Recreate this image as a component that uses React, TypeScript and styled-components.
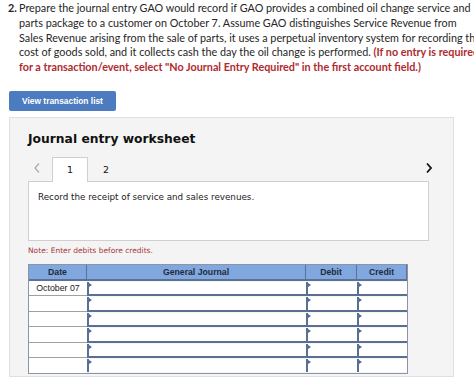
import React from "react";
import styled, { createGlobalStyle } from "styled-components";

const GlobalStyle = createGlobalStyle`
  body {
    margin: 0;
    background: #fff;
    overflow: hidden;
  }
`;

const Page = styled.div`
  width: 474px;
  height: 380px;
  overflow: hidden;
`;

const Question = styled.div`
  display: flex;
  padding: 1px 0 0 8px;
  font-family: Lato, "Liberation Sans", sans-serif;
  font-size: 10.8px;
  line-height: 14.8px;
  color: #262626;
  white-space: nowrap;
`;

const Number = styled.span`
  font-weight: 700;
  width: 11px;
  flex: none;
`;

const Emphasis = styled.span`
  color: #b02a2e;
  font-weight: 700;
`;

const ActionButton = styled.button`
  display: block;
  margin: 16px 0 0 9px;
  width: 107px;
  height: 20px;
  padding: 0;
  border: none;
  border-radius: 2px;
  background: #4c7bbf;
  color: #fff;
  font-family: "Liberation Sans", Arial, sans-serif;
  font-size: 8.4px;
  font-weight: 700;
`;

const Panel = styled.div`
  margin: 6px 0 0 9px;
  width: 425px;
  height: 258px;
  padding: 0 0 0 18px;
  background: #f4f4f4;
  border: 1px solid #e0e0e0;
`;

const Title = styled.h2`
  margin: 12px 0 0 0;
  font-family: "DejaVu Sans", Verdana, sans-serif;
  font-size: 12.3px;
  font-weight: 700;
  color: #111;
  line-height: 18px;
`;

const TabRow = styled.div`
  display: flex;
  align-items: flex-end;
  width: 400px;
  height: 27px;
  margin-top: 6px;
  font-family: "DejaVu Sans", Verdana, sans-serif;
  font-size: 9.5px;
`;

const Arrow = styled.span<{ $active?: boolean }>`
  display: flex;
  width: ${(p) => (p.$active ? "auto" : "19px")};
  margin-left: ${(p) => (p.$active ? "auto" : "5px")};
  margin-right: ${(p) => (p.$active ? "-5px" : "0")};
  align-self: center;
  margin-top: 2px;
`;

const Tab = styled.div<{ $selected?: boolean }>`
  width: 34px;
  height: 24px;
  display: flex;
  align-items: center;
  justify-content: center;
  background: ${(p) => (p.$selected ? "#fff" : "transparent")};
  border: 1px solid ${(p) => (p.$selected ? "#cfcfcf" : "transparent")};
  border-bottom: none;
  margin-bottom: -1px;
  position: relative;
  z-index: 1;
  color: #111;
`;

const Prompt = styled.div`
  width: 390px;
  height: 48px;
  padding: 10px 0 0 9px;
  background: #fff;
  border: 1px solid #cfcfcf;
  font-family: "DejaVu Sans", Verdana, sans-serif;
  font-size: 8.75px;
  color: #222;
`;

const Note = styled.div`
  margin-top: 5px;
  font-family: "DejaVu Sans", Verdana, sans-serif;
  font-size: 7.5px;
  color: #a8343a;
`;

const Table = styled.div`
  margin-top: 9px;
  width: 378px;
  display: grid;
  grid-template-columns: 58px 219px 51px 50px;
  border: 1px solid #8a96a8;
  font-family: "Liberation Sans", Arial, sans-serif;
`;

const HeadCell = styled.div`
  height: 14px;
  display: flex;
  align-items: center;
  justify-content: center;
  background: #80a7de;
  border-right: 1px solid #5b7296;
  border-bottom: 2px solid #5b7296;
  font-size: 8.7px;
  font-weight: 700;
  color: #1f2a3a;
  &:last-child {
    border-right: none;
  }
`;

const DateCell = styled.div<{ $last?: boolean }>`
  height: 14.5px;
  display: flex;
  align-items: center;
  justify-content: center;
  background: #fff;
  border-bottom: ${(p) => (p.$last ? "none" : "1px solid #a0a0a0")};
  font-size: 8.8px;
  color: #222;
`;

const InputCell = styled.div<{ $last?: boolean }>`
  position: relative;
  height: 12.5px;
  margin-top: 1px;
  background: #fff;
  border-left: 2px solid #5a6f92;
  border-bottom: ${(p) => (p.$last ? "none" : "2px solid #5a6f92")};
  &::before {
    content: "";
    position: absolute;
    top: 1px;
    left: 0;
    border-top: 2px solid transparent;
    border-bottom: 2px solid transparent;
    border-left: 3px solid #4a6a9e;
  }
`;

const Chevron = ({ dir, color, weight }: { dir: "left" | "right"; color: string; weight: number }) => (
  <svg width="8" height="12" viewBox="0 0 8 12">
    <path
      d={dir === "left" ? "M6 1.5 L2 6 L6 10.5" : "M2 1.5 L6 6 L2 10.5"}
      fill="none"
      stroke={color}
      strokeWidth={weight}
    />
  </svg>
);

const rows = ["October 07", "", "", "", "", ""];

export default function App() {
  return (
    <Page>
      <GlobalStyle />
      <Question>
        <Number>2.</Number>
        <div>
          Prepare the journal entry GAO would record if GAO provides a combined oil change service and
          <br />
          parts package to a customer on October 7. Assume GAO distinguishes Service Revenue from
          <br />
          Sales Revenue arising from the sale of parts, it uses a perpetual inventory system for recording the
          <br />
          cost of goods sold, and it collects cash the day the oil change is performed.{" "}
          <Emphasis>(If no entry is required</Emphasis>
          <br />
          <Emphasis>
            for a transaction/event, select "No Journal Entry Required" in the first account field.)
          </Emphasis>
        </div>
      </Question>
      <ActionButton>View transaction list</ActionButton>
      <Panel>
        <Title>Journal entry worksheet</Title>
        <TabRow>
          <Arrow>
            <Chevron dir="left" color="#a9a9a9" weight={1.2} />
          </Arrow>
          <Tab $selected>1</Tab>
          <Tab>2</Tab>
          <Arrow $active>
            <Chevron dir="right" color="#111" weight={1.8} />
          </Arrow>
        </TabRow>
        <Prompt>Record the receipt of service and sales revenues.</Prompt>
        <Note>Note: Enter debits before credits.</Note>
        <Table>
          <HeadCell>Date</HeadCell>
          <HeadCell>General Journal</HeadCell>
          <HeadCell>Debit</HeadCell>
          <HeadCell>Credit</HeadCell>
          {rows.map((date, i) => {
            const last = i === rows.length - 1;
            return (
              <React.Fragment key={i}>
                <DateCell $last={last}>{date}</DateCell>
                <InputCell $last={last} />
                <InputCell $last={last} />
                <InputCell $last={last} />
              </React.Fragment>
            );
          })}
        </Table>
      </Panel>
    </Page>
  );
}
